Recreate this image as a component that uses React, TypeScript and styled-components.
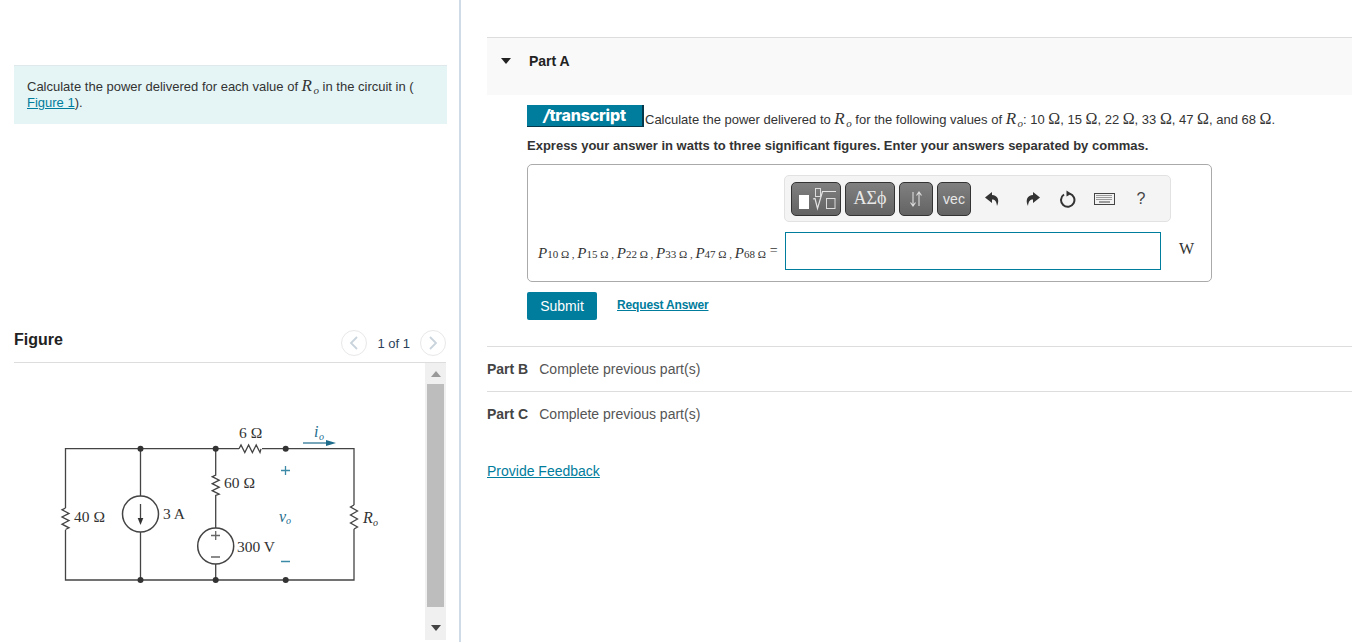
import React from 'react'
import styled, { createGlobalStyle } from 'styled-components'

const GlobalStyle = createGlobalStyle`
  html, body { margin: 0; padding: 0; background: #fff; }
  body { font-family: "Liberation Sans", Arial, sans-serif; color: #333; overflow: hidden; }
`

const Page = styled.div`
  display: flex;
  width: 1352px;
  height: 642px;
  overflow: hidden;
`

const LeftColumn = styled.div`
  width: 461px;
  height: 642px;
  flex: none;
  padding: 65px 12px 2px 14px;
  box-sizing: border-box;
  border-right: 2px solid #cfdbe6;
  display: flex;
  flex-direction: column;
`

const Intro = styled.div`
  height: 59px;
  box-sizing: border-box;
  background: #e5f5f6;
  border-top: 1px solid #dfe8ea;
  padding: 13px 13px 0;
  font-size: 13px;
  line-height: 16px;
`

const Link = styled.a<{ $bold?: boolean }>`
  color: #007c9c;
  text-decoration: underline;
  font-weight: ${p => (p.$bold ? 700 : 400)};
`

const MathVar = styled.span`
  font-family: "Liberation Serif", serif;
  font-style: italic;
  font-size: 17px;
  line-height: 0;
  letter-spacing: 0;
  color: #333;
`

const MathSub = styled.sub`
  font-size: 11px;
  line-height: 0;
  vertical-align: -3px;
  margin-left: 1.5px;
`

const Ohm = styled.span`
  font-family: "Liberation Serif", serif;
  font-size: 16px;
  line-height: 0;
`

const FigureHead = styled.div`
  margin-top: 199px;
  margin-right: 1px;
  height: 39px;
  display: flex;
  align-items: center;
  border-bottom: 1px solid #dddddd;
`

const FigureTitle = styled.div`
  font-size: 16px;
  font-weight: 700;
  color: #222;
  flex: 1;
  margin-top: -6px;
`

const Pager = styled.div`
  display: flex;
  align-items: center;
  gap: 10px;
  font-size: 13px;
  color: #2a3f5c;
`

const PagerText = styled.span`
  margin-top: 1px;
`

const PagerButton = styled.div`
  width: 26px;
  height: 26px;
  box-sizing: border-box;
  border: 1.5px solid #e8e8e8;
  border-radius: 50%;
  display: flex;
  align-items: center;
  justify-content: center;
`

const FigureBody = styled.div`
  display: flex;
  flex: 1;
  min-height: 0;
`

const CircuitBox = styled.div`
  flex: 1;
  min-width: 0;
  padding: 52px 0 0 26px;
`

const ScrollBar = styled.div`
  width: 21px;
  margin-right: 1px;
  background: #f0f0f0;
  display: flex;
  flex-direction: column;
  align-items: center;
`

const ScrollArrowBox = styled.div<{ $h: number; $pad?: number }>`
  height: ${p => p.$h}px;
  box-sizing: border-box;
  padding-top: ${p => p.$pad ?? 0}px;
  display: flex;
  align-items: center;
  justify-content: center;
  flex: none;
`

const ScrollThumb = styled.div`
  width: 17px;
  flex: 1;
  background: #bdbdbd;
`

const RightColumn = styled.div`
  flex: 1;
  padding: 37px 0 0 26px;
  min-width: 0;
`

const PartHeader = styled.div`
  height: 58px;
  box-sizing: border-box;
  background: #f9f9f9;
  border-top: 1px solid #dddddd;
  padding: 15px 0 0 14px;
  display: flex;
  align-items: flex-start;
  font-size: 14px;
  font-weight: 700;
  color: #222;
`

const Caret = styled.div`
  width: 0;
  height: 0;
  margin-top: 5px;
  margin-right: 18px;
  border-left: 5.5px solid transparent;
  border-right: 5.5px solid transparent;
  border-top: 6px solid #222;
`

const PartBody = styled.div`
  padding: 10px 0 0 40px;
`

const Statement = styled.div`
  display: flex;
  align-items: flex-start;
  height: 29px;
  font-size: 13px;
  white-space: nowrap;
`

const Badge = styled.div`
  width: 117px;
  height: 22px;
  box-sizing: border-box;
  background: #007c9c;
  border-right: 2px solid #04384a;
  border-bottom: 1px solid #04384a;
  color: #fff;
  font-family: "Inter", sans-serif;
  font-weight: 800;
  font-size: 16px;
  letter-spacing: -0.2px;
  text-align: center;
  line-height: 21px;
  margin-right: 1px;
  flex: none;
`

const BadgeSlash = styled.span`
  font-style: italic;
`

const StatementText = styled.span`
  margin-top: 7px;
`

const Instruction = styled.div`
  font-size: 13px;
  font-weight: 700;
  line-height: 16px;
  color: #333;
  margin-top: 4px;
`

const AnswerBox = styled.div`
  width: 685px;
  height: 118px;
  box-sizing: border-box;
  margin-top: 10px;
  border: 1px solid #aaaaaa;
  border-radius: 5px;
  padding: 10px 0 0 10px;
`

const ToolbarRow = styled.div`
  display: flex;
  justify-content: flex-end;
  padding-right: 40px;
`

const Toolbar = styled.div`
  width: 387px;
  height: 47px;
  box-sizing: border-box;
  display: flex;
  align-items: center;
  padding-left: 6px;
  gap: 4px;
  background: #f4f4f4;
  border: 1px solid #e2e2e2;
  border-radius: 5px;
`

const ToolButton = styled.div<{ $w: number }>`
  width: ${p => p.$w}px;
  height: 34px;
  box-sizing: border-box;
  background: linear-gradient(#808080, #636363);
  border: 1px solid #333;
  border-radius: 5px;
  color: #e8e8e8;
  display: flex;
  align-items: center;
  justify-content: center;
  font-size: 14px;
  flex: none;
`

const SerifGlyphs = styled.span`
  font-family: "Liberation Serif", "DejaVu Serif", serif;
  font-size: 18px;
`

const PlainTool = styled.div<{ $w: number }>`
  width: ${p => p.$w}px;
  display: flex;
  justify-content: center;
  align-items: center;
  color: #444;
  font-size: 16px;
  flex: none;
`

const InputRow = styled.div`
  display: flex;
  align-items: center;
  margin-top: 10px;
`

const InputLabel = styled.div`
  width: 247px;
  flex: none;
  font-family: "Liberation Serif", serif;
  font-size: 11px;
  color: #333;
  white-space: nowrap;
  margin-top: 5px;
`

const LabelP = styled.i`
  font-size: 15px;
`

const LabelEq = styled.span`
  font-size: 14px;
  margin-left: 1px;
  position: relative;
  top: -3px;
`

const AnswerInput = styled.div`
  width: 376px;
  height: 38px;
  box-sizing: border-box;
  border: 1px solid #007c9c;
  flex: none;
`

const Unit = styled.div`
  font-family: "Liberation Serif", serif;
  font-size: 16px;
  margin-left: 18px;
  margin-top: -4px;
`

const Actions = styled.div`
  display: flex;
  align-items: center;
  margin-top: 10px;
  height: 28px;
`

const Submit = styled.div`
  width: 70px;
  height: 28px;
  background: #007c9c;
  color: #fff;
  border-radius: 2px;
  font-size: 14px;
  line-height: 28px;
  text-align: center;
  margin-right: 20px;
`

const RequestLink = styled(Link)`
  font-size: 12px;
  letter-spacing: -0.15px;
  margin-top: -2px;
`

const LockedPart = styled.div`
  height: 44px;
  box-sizing: border-box;
  border-top: 1px solid #dddddd;
  padding-top: 14px;
  font-size: 14px;
  line-height: 16px;
  color: #555;
`

const PartBFirst = styled(LockedPart)`
  margin-top: 26px;
  height: 45px;
`

const LockedName = styled.b`
  margin-right: 11px;
  color: #444;
`

const Feedback = styled(Link)`
  display: inline-block;
  margin-top: 28px;
  font-size: 14px;
`

const Chevron = ({ left }: { left?: boolean }) => (
  <svg width="10" height="14" viewBox="0 0 10 14">
    <path d={left ? 'M8 1L2 7l6 6' : 'M2 1l6 6-6 6'} fill="none" stroke="#c9d3dc" strokeWidth="1.8" />
  </svg>
)

const Arrow = ({ up }: { up?: boolean }) => (
  <svg width="10" height="6" viewBox="0 0 10 6">
    <path d={up ? 'M5 0l5 6H0z' : 'M0 0h10L5 6z'} fill={up ? '#999' : '#444'} />
  </svg>
)

const RootIcon = () => (
  <svg width="44" height="26" viewBox="0 0 44 26">
    <rect x="5" y="9" width="10" height="14" fill="#fff" />
    <rect x="21.500" y="2.500" width="5" height="8" fill="none" stroke="#ddd" />
    <path d="M19 13l2-.5 2.500 10L28.500 5.500H42" fill="none" stroke="#e4e4e4" strokeWidth="1.200" />
    <rect x="32.500" y="12.500" width="8.500" height="10" fill="none" stroke="#ddd" />
  </svg>
)

const SwapIcon = () => (
  <svg width="14" height="16" viewBox="0 0 14 16" fill="none" stroke="#ddd" strokeWidth="1.100">
    <path d="M4 1v13M1.500 11.500L4 15l2.500-3.500" />
    <path d="M10 15V2M7.500 4.500L10 1l2.500 3.500" />
  </svg>
)

const UndoIcon = ({ flip }: { flip?: boolean }) => (
  <svg width="15" height="14" viewBox="0 0 15 14" style={flip ? { transform: 'scaleX(-1)' } : undefined}>
    <path d="M7 0L0 5.500 7 11V7.500c3 0 4.500 1.500 5 6.500 3-6 .5-11-5-11z" fill="#333" />
  </svg>
)

const ResetIcon = () => (
  <svg width="17" height="18" viewBox="0 0 17 18">
    <path d="M10.500 3.600A6.700 6.700 0 1 1 5 4.500" fill="none" stroke="#333" strokeWidth="2" />
    <path d="M7.500 0.500l5 3.200-5 2.800z" fill="#333" />
  </svg>
)

const KeyboardIcon = () => (
  <svg width="21" height="12" viewBox="0 0 21 12">
    <rect x="0.500" y="0.500" width="20" height="11" fill="#f2f2f2" stroke="#444" />
    <path d="M2.500 2.500h16M2.500 4.500h16M2.500 6.500h16" stroke="#444" strokeWidth="1" strokeDasharray="1 1" />
    <path d="M5 9h11" stroke="#444" />
  </svg>
)

const Circuit = () => (
  <svg width="345" height="180" viewBox="40 415 345 180">
    <g fill="none" stroke="#444" strokeWidth="1.300">
      <path d="M65.500 508V448.700H239M262 448.700H354V505M354 529V580H65.500V530" />
      <path d="M65.500 508l-3.500 1.800 7 3.600-7 3.600 7 3.600-7 3.600 7 3.600-3.500 1.700" />
      <path d="M354 505l-3.500 2 7 4-7 4 7 4-7 4 7 4-3.500 2" />
      <path d="M215.700 448.700V475l-3.500 1.700 7 3.500-7 3.500 7 3.500-7 3.500 7 3.500-3.500 1.300V528M215.700 564V580" />
      <path d="M239 448.700l2-3.700 3.800 7.500 3.800-7.500 3.800 7.500 3.800-7.500 3.800 7.500 1 -3.700" />
      <path d="M140.500 448.700V496M140.500 532V580" />
      <circle cx="140.500" cy="514" r="18" strokeWidth="1.500" />
      <circle cx="215.700" cy="546" r="18" strokeWidth="1.500" />
      <path d="M140.500 504V520" />
      <path d="M215.700 531v9M211 535.500h9M211 557h9" stroke="#666" />
    </g>
    <path d="M137.700 518h5.600l-2.800 7z" fill="#333" />
    <g fill="#333">
      <circle cx="140.500" cy="448.700" r="3" />
      <circle cx="215.700" cy="448.700" r="3" />
      <circle cx="285.700" cy="448.700" r="3" />
      <circle cx="140.500" cy="580" r="3" />
      <circle cx="215.700" cy="580" r="3" />
      <circle cx="285.700" cy="580" r="3" />
    </g>
    <g fontFamily="Liberation Serif, serif" fontSize="15.500" fill="#333">
      <text x="239" y="438">6 Ω</text>
      <text x="224" y="488">60 Ω</text>
      <text x="74" y="522">40 Ω</text>
      <text x="163" y="519">3 A</text>
      <text x="237" y="552">300 V</text>
      <text x="363" y="523" fontStyle="italic" fontSize="16">R</text>
      <text x="373" y="526" fontStyle="italic" fontSize="10">o</text>
    </g>
    <g fontFamily="Liberation Serif, serif" fill="#1d6c8c" fontStyle="italic">
      <text x="314" y="437" fontSize="16">i</text>
      <text x="319" y="440" fontSize="10">o</text>
      <text x="279" y="522" fontSize="16">v</text>
      <text x="286" y="524" fontSize="10">o</text>
    </g>
    <path d="M303 443h26" stroke="#1d6c8c" strokeWidth="1.200" />
    <path d="M326 440l10 3-10 3z" fill="#1d6c8c" />
    <path d="M281 470.500h9M285.500 466v9M281 561.500h9" stroke="#3c8aa6" strokeWidth="1.300" fill="none" />
  </svg>
)

const LabelTerm = ({ n, last }: { n: number; last?: boolean }) => (
  <>
    <LabelP>P</LabelP>
    {n} Ω{last ? ' ' : ' , '}
  </>
)

const Ro = () => (
  <MathVar>
    R<MathSub>o</MathSub>
  </MathVar>
)

const App: React.FunctionComponent = () => {
  const values = [10, 15, 22, 33, 47, 68]

  return (
    <Page>
      <GlobalStyle />
      <LeftColumn>
        <Intro>
          Calculate the power delivered for each value of <Ro /> in the circuit in (
          <br />
          <Link>Figure 1</Link>).
        </Intro>
        <FigureHead>
          <FigureTitle>Figure</FigureTitle>
          <Pager>
            <PagerButton><Chevron left /></PagerButton>
            <PagerText>1 of 1</PagerText>
            <PagerButton><Chevron /></PagerButton>
          </Pager>
        </FigureHead>
        <FigureBody>
          <CircuitBox><Circuit /></CircuitBox>
          <ScrollBar>
            <ScrollArrowBox $h={21}><Arrow up /></ScrollArrowBox>
            <ScrollThumb />
            <ScrollArrowBox $h={33} $pad={9}><Arrow /></ScrollArrowBox>
          </ScrollBar>
        </FigureBody>
      </LeftColumn>
      <RightColumn>
        <PartHeader>
          <Caret />
          Part A
        </PartHeader>
        <PartBody>
          <Statement>
            <Badge><BadgeSlash>/</BadgeSlash>transcript</Badge>
            <StatementText>
              Calculate the power delivered to <Ro /> for the following values of <Ro />: 10 <Ohm>Ω</Ohm>, 15 <Ohm>Ω</Ohm>, 22 <Ohm>Ω</Ohm>, 33 <Ohm>Ω</Ohm>, 47 <Ohm>Ω</Ohm>, and 68 <Ohm>Ω</Ohm>.
            </StatementText>
          </Statement>
          <Instruction>Express your answer in watts to three significant figures. Enter your answers separated by commas.</Instruction>
          <AnswerBox>
            <ToolbarRow>
              <Toolbar>
                <ToolButton $w={50}><RootIcon /></ToolButton>
                <ToolButton $w={50}><SerifGlyphs>ΑΣϕ</SerifGlyphs></ToolButton>
                <ToolButton $w={34}><SwapIcon /></ToolButton>
                <ToolButton $w={34}>vec</ToolButton>
                <PlainTool $w={34}><UndoIcon /></PlainTool>
                <PlainTool $w={38}><UndoIcon flip /></PlainTool>
                <PlainTool $w={24}><ResetIcon /></PlainTool>
                <PlainTool $w={42}><KeyboardIcon /></PlainTool>
                <PlainTool $w={24}>?</PlainTool>
              </Toolbar>
            </ToolbarRow>
            <InputRow>
              <InputLabel>
                {values.map((v, i) => (
                  <LabelTerm key={v} n={v} last={i === values.length - 1} />
                ))}
                <LabelEq>=</LabelEq>
              </InputLabel>
              <AnswerInput />
              <Unit>W</Unit>
            </InputRow>
          </AnswerBox>
          <Actions>
            <Submit>Submit</Submit>
            <RequestLink $bold>Request Answer</RequestLink>
          </Actions>
        </PartBody>
        <PartBFirst>
          <LockedName>Part B</LockedName>Complete previous part(s)
        </PartBFirst>
        <LockedPart>
          <LockedName>Part C</LockedName>Complete previous part(s)
        </LockedPart>
        <Feedback>Provide Feedback</Feedback>
      </RightColumn>
    </Page>
  )
}

export default App
